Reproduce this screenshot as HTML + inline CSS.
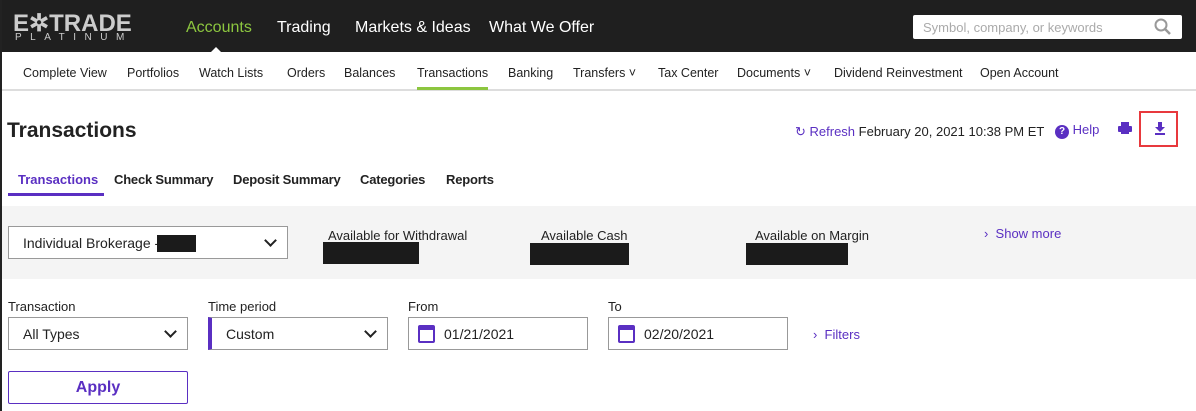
<!DOCTYPE html><html><head><style>
*{box-sizing:border-box;margin:0;padding:0}
body{width:1196px;height:411px;overflow:hidden;background:#fff;font-family:"Liberation Sans",sans-serif;position:relative;color:#222}
.a{position:absolute;white-space:nowrap}
.top{position:absolute;left:0;top:0;width:1196px;height:52px;background:#1f1f1f}
.top .n{position:absolute;top:19px;font-size:16px;color:#fff}
.sub{position:absolute;left:0;top:52px;width:1196px;height:39px;border-bottom:2px solid #ddd}
.sub span{position:absolute;top:14px;font-size:12.5px;color:#222}
.pur{color:#5a2fc2}
.box{position:absolute;border:1px solid #999;background:#fff;height:33px;font-size:14px}
.box .t{position:absolute;left:14px;top:8px}
.chev{position:absolute;right:12px;top:9px;width:9px;height:9px;border-right:2px solid #222;border-bottom:2px solid #222;transform:rotate(45deg)}
.red{position:absolute;background:#1b1b1b;height:22px}
.lbl{position:absolute;font-size:13px}
.cal{position:absolute;left:9px;top:7px;width:17px;height:18px;border:2px solid #5a2fc2;border-top-width:5px;border-radius:2px}
</style></head><body>
<div class="a" style="left:0;top:0;width:2px;height:411px;background:#222;z-index:5"></div>
<div class="top">
<div class="a" style="left:13px;top:9px;font-size:24px;font-weight:bold;color:#ccc">E✲TRADE</div>
<div class="a" style="left:15px;top:32px;font-size:10px;color:#ccc;letter-spacing:8.5px">PLATINUM</div>
<div class="n" style="left:186px;color:#8cc63f">Accounts</div>
<div class="n" style="left:277px">Trading</div>
<div class="n" style="left:355px">Markets &amp; Ideas</div>
<div class="n" style="left:489px">What We Offer</div>
<div class="a" style="left:913px;top:15px;width:269px;height:24px;background:#fff;border-radius:2px;font-size:13px;color:#aaa;padding:5px 10px">Symbol, company, or keywords</div>
<svg class="a" style="left:1154px;top:18px" width="18" height="18"><circle cx="7" cy="7" r="5.5" fill="none" stroke="#999" stroke-width="2"/><path d="M11 11l5 5" stroke="#999" stroke-width="2.5"/></svg>
<div class="a" style="left:210px;top:47px;width:0;height:0;border:6px solid transparent;border-bottom-color:#fff;border-top:0"></div>
</div>
<div class="sub">
<span style="left:23px">Complete View</span><span style="left:127px">Portfolios</span><span style="left:199px">Watch Lists</span><span style="left:287px">Orders</span><span style="left:344px">Balances</span><span style="left:417px">Transactions</span><span style="left:508px">Banking</span><span style="left:573px">Transfers ˅</span><span style="left:658px">Tax Center</span><span style="left:737px">Documents ˅</span><span style="left:834px">Dividend Reinvestment</span><span style="left:980px">Open Account</span>
<div class="a" style="left:417px;top:35px;width:71px;height:3px;background:#8cc63f"></div>
</div>
<div class="a" style="left:7px;top:119px;font-size:21px;font-weight:bold">Transactions</div>
<div class="a" style="left:795px;top:124px;font-size:13px"><span class="pur">↻ Refresh</span> February 20, 2021 10:38 PM ET</div>
<div class="a pur" style="left:1055px;top:122px;font-size:13px"><span style="display:inline-block;width:14px;height:14px;border-radius:50%;background:#5a2fc2;color:#fff;font-size:10px;text-align:center;font-weight:bold;line-height:14px">?</span> Help</div>
<svg class="a" style="left:1118px;top:122px" width="14" height="13"><rect x="3" y="0" width="8" height="4" fill="#5a2fc2"/><rect x="0" y="4" width="14" height="6" rx="1" fill="#5a2fc2"/><rect x="3" y="8" width="8" height="4" fill="#5a2fc2"/></svg>
<div class="a" style="left:1139px;top:111px;width:39px;height:36px;border:2px solid #e8393d"></div>
<svg class="a" style="left:1154px;top:122px" width="12" height="13"><path d="M4 0h4v5h3L6 10 1 5h3z" fill="#5a2fc2"/><rect x="1" y="11" width="10" height="2" fill="#5a2fc2"/></svg>
<div class="a" style="left:18px;top:172px;font-size:13px;font-weight:bold;color:#5a2fc2">Transactions</div>
<div class="a" style="left:8px;top:193px;width:96px;height:3px;background:#5a2fc2"></div>
<div class="a" style="left:114px;top:172px;font-size:13px;font-weight:bold;letter-spacing:-0.2px">Check Summary</div>
<div class="a" style="left:233px;top:172px;font-size:13px;font-weight:bold;letter-spacing:-0.2px">Deposit Summary</div>
<div class="a" style="left:360px;top:172px;font-size:13px;font-weight:bold;letter-spacing:-0.2px">Categories</div>
<div class="a" style="left:446px;top:172px;font-size:13px;font-weight:bold;letter-spacing:-0.2px">Reports</div>
<div class="a" style="left:0;top:206px;width:1196px;height:73px;background:#f4f4f4"></div>
<div class="box" style="left:8px;top:226px;width:280px;height:33px"><span class="t">Individual Brokerage -</span><div class="red" style="left:148px;top:8px;width:39px;height:17px"></div><div class="chev"></div></div>
<div class="lbl" style="left:328px;top:228px">Available for Withdrawal</div><div class="red" style="left:323px;top:242px;width:96px"></div>
<div class="lbl" style="left:541px;top:228px">Available Cash</div><div class="red" style="left:530px;top:243px;width:99px"></div>
<div class="lbl" style="left:755px;top:228px">Available on Margin</div><div class="red" style="left:746px;top:243px;width:102px"></div>
<div class="lbl pur" style="left:984px;top:226px">›&nbsp;&nbsp;Show more</div>
<div class="lbl" style="left:8px;top:299px">Transaction</div>
<div class="lbl" style="left:208px;top:299px">Time period</div>
<div class="lbl" style="left:408px;top:299px">From</div>
<div class="lbl" style="left:608px;top:299px">To</div>
<div class="box" style="left:8px;top:317px;width:180px"><span class="t">All Types</span><div class="chev"></div></div>
<div class="box" style="left:208px;top:317px;width:180px;border-left:4px solid #5a2fc2"><span class="t">Custom</span><div class="chev"></div></div>
<div class="box" style="left:408px;top:317px;width:180px"><div class="cal"></div><span class="t" style="left:35px">01/21/2021</span></div>
<div class="box" style="left:608px;top:317px;width:180px"><div class="cal"></div><span class="t" style="left:35px">02/20/2021</span></div>
<div class="lbl pur" style="left:813px;top:327px">›&nbsp;&nbsp;Filters</div>
<div class="a" style="left:8px;top:371px;width:180px;height:33px;border:1px solid #5a2fc2;border-radius:2px;text-align:center;font-size:16px;font-weight:bold;color:#5a2fc2;padding-top:7px">Apply</div>
</body></html>
